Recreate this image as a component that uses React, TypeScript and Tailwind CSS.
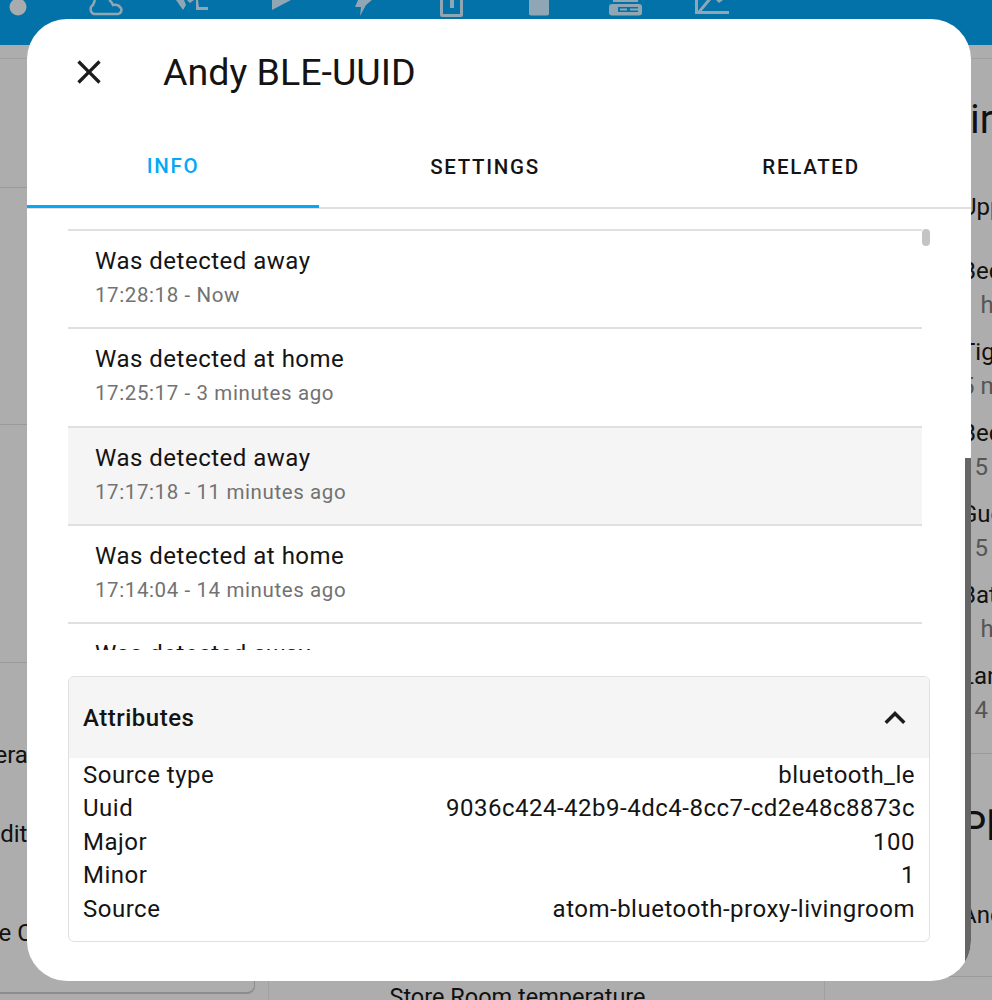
import { FC, ReactNode } from 'react';

const events = [
  { title: 'Was detected away', time: '17:28:18 - Now' },
  { title: 'Was detected at home', time: '17:25:17 - 3 minutes ago' },
  { title: 'Was detected away', time: '17:17:18 - 11 minutes ago', active: true },
  { title: 'Was detected at home', time: '17:14:04 - 14 minutes ago' },
  { title: 'Was detected away', time: '17:09:18 - 19 minutes ago' },
];

const attributes = [
  ['Source type', 'bluetooth_le'],
  ['Uuid', '9036c424-42b9-4dc4-8cc7-cd2e48c8873c'],
  ['Major', '100'],
  ['Minor', '1'],
  ['Source', 'atom-bluetooth-proxy-livingroom'],
];

const sensors = [
  ['Bedroom', '1 hour ago'],
  ['Tigers', '5 minutes ago'],
  ['Bedroom 2', '15 minutes ago'],
  ['Guest', '15 minutes ago'],
  ['Battery', '1 hour ago'],
  ['Landing', '14 minutes ago'],
];

const HeaderIcon: FC<{ children: ReactNode; className: string }> = ({ children, className }) => (
  <svg viewBox="0 0 40 45" className={`h-[45px] w-10 shrink-0 fill-[#8fa6b4] ${className}`}>
    {children}
  </svg>
);

const Background: FC = () => (
  <div className="flex h-[1000px] w-[992px] flex-col overflow-hidden bg-[#adadad] text-[24px] text-[#111]">
    <div className="flex h-[45px] shrink-0 bg-[#0272a8]">
      <HeaderIcon className="-ml-[2px]"><circle cx="20" cy="7" r="8.5" className="fill-[#a9acaf]" /></HeaderIcon>
      <HeaderIcon className="ml-[47px]">
        <path
          d="M10 0L8 5A5 5 0 0 0 9 14H33A4 4 0 0 0 35 7Q33 4 28 5Q26 1 24 0"
          fill="none"
          stroke="#8fa6b4"
          strokeWidth="2.5"
        />
      </HeaderIcon>
      <HeaderIcon className="ml-[47px]"><path d="M4 0h8l2 5-3 5zM15 0l3 3 4-3zM24 0h2l1 7h9v3H24z" /></HeaderIcon>
      <HeaderIcon className="ml-[50px]"><path d="M10 0v10L29 0z" /></HeaderIcon>
      <HeaderIcon className="ml-[43px]"><path d="M11 0h16l-6 5-6 11 1-9h-6l3-7z" /></HeaderIcon>
      <HeaderIcon className="ml-[47px]"><path d="M8 0v15a2 2 0 0 0 2 2h19a2 2 0 0 0 2-2V0h-3v14H11V0zM18 0h4v8h-4z" /></HeaderIcon>
      <HeaderIcon className="ml-[47px]"><path d="M10 0h20v13.5a2 2 0 0 1-2 2H12a2 2 0 0 1-2-2z" /></HeaderIcon>
      <HeaderIcon className="ml-[46px]">
        <path
          fillRule="evenodd"
          d="M8 0h25v2H8zM7 4h27a3 3 0 0 1 3 3v5.5a3 3 0 0 1-3 3H7a3 3 0 0 1-3-3V7a3 3 0 0 1 3-3zM13 7v5h20V7zM15 8.5h7v2h-7zM25 8.5h8v2h-8z"
        />
      </HeaderIcon>
      <HeaderIcon className="ml-[47px]"><path d="M3 0h3v11h31v3H3zM6 11L15 0h4L8 13zM24 0h7l-4 3z" /></HeaderIcon>
    </div>
    <div className="h-[14px] shrink-0 border-b border-[#a0a0a0]" />
    <div className="flex min-h-0 flex-1">
      <div className="flex w-[255px] shrink-0 flex-col">
        <div className="h-[129px] border-b border-[#9a9a9a]" />
        <div className="h-[237px] border-b border-[#9a9a9a]" />
        <div className="h-[238px] border-b border-[#9a9a9a]" />
        <div className="flex h-[331px] flex-col rounded-br-lg border-r border-b-2 border-[#8c8c8c] pt-[78px]">
          <span className="-ml-[66px] leading-7 whitespace-nowrap">Temperature</span>
          <span className="mt-[51px] -ml-[57px] leading-7 whitespace-nowrap">Humidity</span>
          <span className="mt-[71px] -ml-[45px] leading-7 whitespace-nowrap">Store CO2</span>
        </div>
      </div>
      <div className="ml-[13px] flex w-[557px] shrink-0 items-end justify-center border-x border-[#a0a0a0] pr-[58px] text-[23.5px] leading-[21px]">
        <span className="translate-y-[8px] whitespace-nowrap">Store Room temperature</span>
      </div>
      <div className="flex w-[167px] shrink-0 flex-col whitespace-nowrap">
        <div className="flex h-[695px] shrink-0 flex-col border-b border-[#9a9a9a] pl-[136px]">
          <span className="mt-[38px] -ml-[17px] text-[40px] leading-[46px]">Air</span>
          <span className="mt-[50px] leading-7">Upper</span>
          {sensors.map(([name, time], i) => (
            <div key={name} className={i === 0 ? 'mt-[36px] flex flex-col' : 'mt-[19px] flex flex-col'}>
              <span className="leading-7">{name}</span>
              <span className="mt-[6px] leading-7 text-[#555]">{time}</span>
            </div>
          ))}
        </div>
        <div className="flex h-[223px] shrink-0 flex-col border-b border-[#9a9a9a] pl-[136px]">
          <span className="mt-[50px] text-[40px] leading-[46px]">Plants</span>
          <span className="mt-[51px] leading-7">Andy</span>
        </div>
      </div>
    </div>
  </div>
);

const Modal: FC = () => (
  <div className="absolute top-[19px] left-[27px] flex h-[962px] w-[944px] flex-col overflow-hidden rounded-[40px] bg-white text-[#141414]">
    <div className="flex h-[106px] shrink-0 items-center pb-[1px] pl-[42px]">
      <svg viewBox="0 0 24 24" className="h-10 w-10 fill-[#1c1c1c]">
        <path d="M19,6.41L17.59,5L12,10.59L6.41,5L5,6.41L10.59,12L5,17.59L6.41,19L12,13.41L17.59,19L19,17.59L13.41,12L19,6.41Z" />
      </svg>
      <h1 className="ml-[54px] text-[37.6px] leading-10 font-normal">Andy BLE-UUID</h1>
    </div>
    <div className="grid h-[84px] shrink-0 grid-cols-[292px_332px_320px] border-b-2 border-[#e0e0e0] text-[20.5px] font-medium tracking-[1.7px]">
      <div className="-mb-[1px] flex items-center justify-center border-b-[3px] border-[#03a9f4] pt-[2px] text-[#03a9f4]">INFO</div>
      <div className="flex items-center justify-center pt-[2px]">SETTINGS</div>
      <div className="flex items-center justify-center pt-[2px]">RELATED</div>
    </div>
    <div className="mt-[20px] ml-[41px] flex h-[421px] w-[862px] shrink-0 overflow-hidden">
      <div className="w-[854px] shrink-0">
        {events.map((event) => (
          <div
            key={event.time}
            className={`h-[98.3px] border-t-2 border-[#e0e0e0] pt-[15px] pl-[27px] tracking-[0.5px] ${event.active ? 'bg-[#f5f5f5]' : ''}`}
          >
            <div className="text-[24px] leading-[30px]">{event.title}</div>
            <div className="mt-[6px] text-[20.5px] leading-[26px] tracking-[0.6px] text-[#727272]">{event.time}</div>
          </div>
        ))}
      </div>
      <div className="h-[17px] w-2 shrink-0 rounded bg-[#c4c4c4]" />
    </div>
    <div className="mt-[26px] ml-[41px] h-[266px] w-[862px] shrink-0 overflow-hidden rounded-md border border-[#e0e0e0]">
      <div className="flex h-[81px] items-center justify-between bg-[#f5f5f5] pr-[13px] pl-[14px]">
        <span className="text-[24px] font-medium tracking-[0.5px]">Attributes</span>
        <svg viewBox="0 0 24 24" className="h-[42px] w-[42px] fill-[#1c1c1c]">
          <path d="M7.41,15.41L12,10.83L16.59,15.41L18,14L12,8L6,14L7.41,15.41Z" />
        </svg>
      </div>
      <div className="px-[14px] pt-[1px] text-[24px] leading-[33.4px] tracking-[0.5px]">
        {attributes.map(([name, value]) => (
          <div key={name} className="flex justify-between">
            <span>{name}</span>
            <span>{value}</span>
          </div>
        ))}
      </div>
    </div>
    <div className="absolute top-[439px] right-0 bottom-0 w-[6px] bg-[#666]" />
  </div>
);

export default function App() {
  return (
    <div className="relative h-[1000px] w-[992px] overflow-hidden font-['Roboto',sans-serif]">
      <Background />
      <Modal />
    </div>
  );
}
